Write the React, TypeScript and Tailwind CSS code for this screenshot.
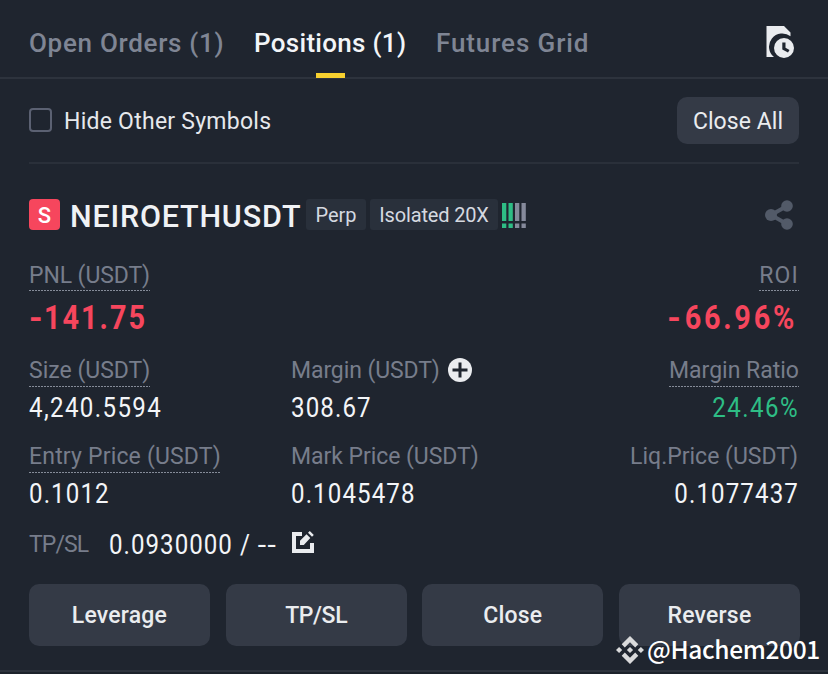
import type { ReactNode } from "react";

function Label({ children, dotted = false, track = "tracking-[0.1px]" }: { children: ReactNode; dotted?: boolean; track?: string }) {
  return (
    <div className={`relative flex h-[33px] items-center whitespace-nowrap text-[23px] leading-[33px] text-[#777d8b] ${track}`}>
      {children}
      {dotted && (
        <span className="absolute inset-x-0 bottom-0 h-px bg-[repeating-linear-gradient(90deg,#858c99_0_2px,transparent_2px_3px)]" />
      )}
    </div>
  );
}

function Value({ children, right = false, color = "text-[#f3f5f8]", track = "tracking-[1.3px]" }: { children: ReactNode; right?: boolean; color?: string; track?: string }) {
  return (
    <div className={`h-[34px] scale-x-[0.86] whitespace-nowrap text-[28px] leading-[34px] ${track} ${right ? "origin-right" : "origin-left"} ${color}`}>
      {children}
    </div>
  );
}

function Action({ children, track = "tracking-[0.2px]" }: { children: ReactNode; track?: string }) {
  return (
    <button className={`h-[62px] w-[181px] rounded-[10px] bg-[#343a46] pt-[2px] text-[23px] font-medium leading-[60px] text-[#eaecef] ${track}`}>
      {children}
    </button>
  );
}

export default function App() {
  return (
    <div className="relative h-[674px] w-[828px] overflow-hidden bg-[#1f252f] font-['Roboto',sans-serif]">
      <header className="flex h-[79px] items-start border-b-2 border-[#2d333d] pl-[29px] pr-[33px] text-[26px] font-medium leading-[86px] text-[#7f8594]">
        <div className="w-[225px] whitespace-nowrap tracking-[0.7px]">Open Orders (1)</div>
        <div className="relative w-[182px] whitespace-nowrap tracking-[0.3px] text-[#f3f5f8]">
          Positions (1)
          <span className="absolute left-[62px] top-[73px] h-[5px] w-[29px] bg-[#f8d12f]" />
        </div>
        <div className="whitespace-nowrap tracking-[0.9px]">Futures Grid</div>
        <svg className="ml-auto mt-[26px] h-[33px] w-[29px]" viewBox="0 0 29 33" fill="#eaecef">
          <path d="M0.5 0H18L24.5 6.5V10.3A12.5 12.5 0 0 0 8 31H0.5Z" />
          <path fillRule="evenodd" d="M18 12a10 10 0 1 0 0 20a10 10 0 0 0 0-20ZM16.3 16.5h3.2v5.2l4 2.2-1.5 2.7-5.7-3.2Z" />
        </svg>
      </header>

      <main className="px-[29px]">
        <div className="flex h-[85px] items-start justify-between border-b-2 border-[#2a303a] pt-[18px]">
          <div className="flex h-[47px] items-center">
            <span className="mb-px h-[24px] w-[23px] rounded-[4px] border-2 border-[#5b6172]" />
            <span className="ml-[12px] mt-[3px] whitespace-nowrap text-[23px] tracking-[0.25px] text-[#e6e8ec]">Hide Other Symbols</span>
          </div>
          <button className="h-[47px] w-[122px] rounded-[10px] bg-[#343a46] pt-[3px] text-[23px] tracking-[0.05px] text-[#eaecef]">Close All</button>
        </div>

        <div className="mt-[34px] flex h-[33px] items-center">
          <span className="flex h-[31px] w-[31px] items-center justify-center rounded-[4px] bg-[#f6465d] pt-[1px] text-[22px] font-medium text-white">S</span>
          <span className="ml-[10px] mt-[5px] w-[236px] whitespace-nowrap text-[30.5px] font-medium tracking-[0.8px] text-[#f0f2f5]">NEIROETHUSDT</span>
          <span className="h-[31px] w-[60px] rounded-[3px] bg-[#29303b] text-center text-[20px] leading-[33px] text-[#d5d9e0]">Perp</span>
          <span className="ml-[4px] h-[31px] w-[128px] whitespace-nowrap rounded-[3px] bg-[#29303b] text-center text-[20px] leading-[33px] tracking-[-0.15px] text-[#d5d9e0]">Isolated 20X</span>
          <svg className="ml-[4px] mt-[1px] h-[25px] w-[24px]" viewBox="0 0 24 25">
            <path fill="#2ebd85" d="M0 0h4.3v18H0zM6.5 0h4.3v18H6.5zM0 20.5h4.3V25H0zM6.5 20.5h4.3V25H6.5z" />
            <path fill="#858a9b" d="M13 0h4.3v18H13zM19.5 0h4.3v18H19.5zM13 20.5h4.3V25H13zM19.5 20.5h4.3V25H19.5z" />
          </svg>
          <svg className="ml-auto mr-[6px] h-[30px] w-[28px]" viewBox="0 0 28 30" fill="#525a68">
            <path d="M6 15L22 6M6 15L22 24" stroke="#525a68" strokeWidth="4" />
            <circle cx="6" cy="15" r="6" />
            <circle cx="22" cy="6" r="5.8" />
            <circle cx="22" cy="24" r="5.8" />
          </svg>
        </div>

        <div className="mt-[27px] flex justify-between leading-[35px]">
          <Label dotted track="tracking-[-0.1px]"><span className="pt-[2px]">PNL (USDT)</span></Label>
          <Label dotted track="tracking-[1.2px]"><span className="pt-[2px]">ROI</span></Label>
        </div>
        <div className="mt-[7px] flex h-[40px] justify-between text-[33.5px] font-bold leading-[40px] text-[#f6465d]">
          <div className="flex origin-left scale-x-[0.86] tracking-[2.3px]">
            <span className="mr-[2px] inline-block origin-left scale-x-[1.2]">-</span>141.75
          </div>
          <div className="mr-[2px] flex origin-right scale-x-[0.86] tracking-[3.2px]">
            <span className="mr-[4px] inline-block origin-left scale-x-[1.2]">-</span>66.96%
          </div>
        </div>

        <div className="mt-[16px] grid grid-cols-[262px_262px_1fr]">
          <div className="flex flex-col items-start"><Label dotted track="tracking-[0px]">Size (USDT)</Label><div className="h-[4px]" /><Value track="tracking-[1.6px]">4,240.5594</Value></div>
          <div className="flex flex-col items-start">
            <Label track="tracking-[-0.1px]">
              Margin (USDT)
              <svg className="mb-[2px] ml-[8px] h-[24px] w-[24px]" viewBox="0 0 24 24">
                <circle cx="12" cy="12" r="12" fill="#eaecef" />
                <path d="M12 4.5v15M4.5 12h15" stroke="#1f252f" strokeWidth="3" />
              </svg>
            </Label>
            <div className="h-[4px]" />
            <Value>308.67</Value>
          </div>
          <div className="flex flex-col items-end"><Label dotted track="tracking-[0px]">Margin Ratio</Label><div className="h-[4px]" /><Value right color="text-[#2ebd85]" track="tracking-[1.7px]">24.46%</Value></div>
        </div>

        <div className="mt-[15px] grid grid-cols-[262px_262px_1fr]">
          <div className="flex flex-col items-start"><Label dotted track="tracking-[0.18px]">Entry Price (USDT)</Label><div className="h-[4px]" /><Value>0.1012</Value></div>
          <div className="flex flex-col items-start"><Label track="tracking-[-0.05px]">Mark Price (USDT)</Label><div className="h-[4px]" /><Value>0.1045478</Value></div>
          <div className="flex flex-col items-end"><Label track="tracking-[0px]"><span className="mr-px">Liq.Price (USDT)</span></Label><div className="h-[4px]" /><Value right>0.1077437</Value></div>
        </div>

        <div className="mt-[16px] flex h-[34px] items-center">
          <div className="w-[80px]"><Label track="tracking-[-0.9px]">TP/SL</Label></div>
          <div className="w-[183px] pt-[1px]"><Value track="tracking-[1.2px]">0.0930000 / <span className="inline-block origin-left scale-x-[1.25]">--</span></Value></div>
          <svg className="mb-[4px] h-[22px] w-[22px]" viewBox="0 0 22 22" fill="#eaecef">
            <path d="M0 1H10V5H4V18H18V12H22V22H0Z" />
            <path d="M8 14V9.8L14.5 3.3L18.3 7.1L11.8 14ZM16 1.8L17.8 0L21.8 4L20 5.8Z" />
          </svg>
        </div>

        <div className="mt-[23px] flex w-[771px] justify-between">
          <Action>Leverage</Action>
          <Action track="tracking-[-0.4px]">TP/SL</Action>
          <Action>Close</Action>
          <Action>Reverse</Action>
        </div>
      </main>

      <div className="absolute inset-x-0 top-[670px] h-[4px] border-t-2 border-[#2d333d] bg-[#1c222b]" />

      <div className="absolute left-[616px] top-[636px] flex h-[30px] items-center">
        <svg className="mb-[2px] h-[28px] w-[28px]" viewBox="0 0 28 28" fill="#d9dadb">
          <path d="M14 0L22.3 8.3L19.2 11.4L14 6.2L8.8 11.4L5.7 8.3ZM14 28L22.3 19.7L19.2 16.6L14 21.8L8.8 16.6L5.7 19.7ZM0 14L3.1 10.9L6.2 14L3.1 17.1ZM28 14L24.9 10.9L21.8 14L24.9 17.1ZM14 10.9L17.1 14L14 17.1L10.9 14Z" />
        </svg>
        <span className="mb-[4px] ml-[3px] whitespace-nowrap font-['Noto_Sans_CJK_SC',sans-serif] text-[24.5px] font-medium leading-[30px] tracking-[-0.35px] text-white">@Hachem2001</span>
      </div>
    </div>
  );
}
